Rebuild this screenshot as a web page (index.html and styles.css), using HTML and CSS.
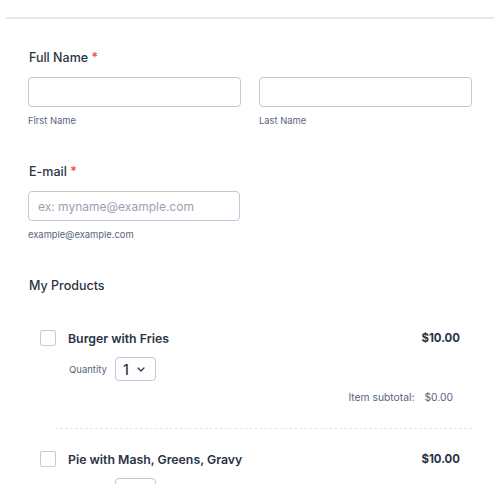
FILE: index.html
```html
<!DOCTYPE html>
<html>
<head>
<meta charset="utf-8">
<link rel="stylesheet" href="styles.css">
</head>
<body>
<div class="topline"></div>
<form class="form">
  <div class="field">
    <div class="label">Full Name <span class="req">*</span></div>
    <div class="row2">
      <div class="col">
        <div class="input"></div>
        <div class="sub">First Name</div>
      </div>
      <div class="col">
        <div class="input"></div>
        <div class="sub">Last Name</div>
      </div>
    </div>
  </div>
  <div class="field email">
    <div class="label">E-mail <span class="req">*</span></div>
    <div class="input half"><span class="ph">ex: myname@example.com</span></div>
    <div class="sub">example@example.com</div>
  </div>
  <div class="field products">
    <div class="label plain">My Products</div>
    <div class="product first">
      <div class="prow">
        <span class="cb"></span>
        <span class="pname">Burger with Fries</span>
        <span class="price">$10.00</span>
      </div>
      <div class="qrow">
        <span class="qlabel">Quantity</span>
        <span class="select">1<svg class="chev" width="8" height="5" viewBox="0 0 8 5"><path d="M1 1l3 3 3-3" fill="none" stroke="#2c3345" stroke-width="1.2" stroke-linecap="round" stroke-linejoin="round"/></svg></span>
      </div>
      <div class="subtotal"><span>Item subtotal:</span><span class="amt">$0.00</span></div>
    </div>
    <div class="divider"></div>
    <div class="product next">
      <div class="prow">
        <span class="cb"></span>
        <span class="pname">Pie with Mash, Greens, Gravy</span>
        <span class="price">$10.00</span>
      </div>
      <div class="qrow">
        <span class="qlabel">Quantity</span>
        <span class="select">1<svg class="chev" width="8" height="5" viewBox="0 0 8 5"><path d="M1 1l3 3 3-3" fill="none" stroke="#2c3345" stroke-width="1.2" stroke-linecap="round" stroke-linejoin="round"/></svg></span>
      </div>
    </div>
  </div>
</form>
</body>
</html>
```
FILE: styles.css
```css
html, body {
  margin: 0;
  padding: 0;
  background: #ffffff;
  font-family: Inter, "Noto Sans", sans-serif;
  color: #2c3345;
  overflow: hidden;
}
.topline {
  margin: 17px 6px 0;
  height: 2px;
  background: #e6e7ee;
}
.form {
  padding: 29px 28px 0;
}
.label {
  font-size: 12.5px;
  line-height: 20px;
  font-weight: 500;
  color: #2c3345;
  margin-bottom: 9px;
  padding-left: 1px;
}
.req {
  color: #f23a3c;
}
.row2 {
  display: grid;
  grid-template-columns: 213px 213px;
  column-gap: 18px;
}
.input {
  box-sizing: border-box;
  height: 30px;
  border: 1px solid #c3c4d9;
  border-radius: 4px;
  background: #fff;
  display: flex;
  align-items: center;
  padding: 0 9px;
}
.input.half {
  width: 212px;
}
.ph {
  font-size: 12px;
  color: #9b9fb0;
}
.sub {
  font-size: 9.4px;
  line-height: 14px;
  color: #57647e;
  margin-top: 7px;
}
.field.email {
  margin-top: 34px;
}
.field.products {
  margin-top: 34px;
}
.label.plain {
  margin-bottom: 0;
}
.product {
  padding: 0 12px;
}
.product.first {
  margin-top: 34px;
}
.prow {
  display: flex;
  align-items: center;
  height: 16px;
}
.cb {
  box-sizing: border-box;
  width: 16px;
  height: 16px;
  border: 1px solid #c9cad9;
  border-radius: 2px;
  margin-right: 12px;
  flex: none;
}
.pname {
  font-size: 12.3px;
  font-weight: 600;
  color: #2c3345;
  flex: 1;
}
.price {
  font-size: 11.4px;
  font-weight: 700;
  color: #2c3345;
}
.qrow {
  display: flex;
  align-items: center;
  margin-top: 11px;
  padding-left: 29px;
}
.qlabel {
  font-size: 9.5px;
  color: #57647e;
  margin-right: 8px;
}
.select {
  box-sizing: border-box;
  width: 41px;
  height: 24px;
  border: 1px solid #c3c4d9;
  border-radius: 4px;
  display: flex;
  align-items: center;
  justify-content: space-between;
  padding: 0 10px 0 7px;
  font-size: 14px;
  font-weight: 500;
  color: #2c3345;
}
.chev {
  display: block;
}
.subtotal {
  display: flex;
  justify-content: flex-end;
  gap: 10px;
  font-size: 10.3px;
  color: #57647e;
  line-height: 14px;
  margin-top: 9px;
  padding-right: 7px;
}
.divider {
  margin: 24px 0 0 27px;
  border-top: 1px dashed #e3e4ec;
}
.product.next {
  margin-top: 22px;
}
```
